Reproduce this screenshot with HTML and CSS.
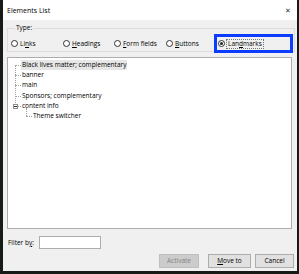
FILE: index.html
```html
<!DOCTYPE html>
<html lang="en">

<head>
  <meta charset="UTF-8">
  <meta name="viewport" content="width=device-width, initial-scale=1.0">
  <title>Elements List</title>
  <link rel="stylesheet" href="styles.css">
</head>

<body>
  <div class="dialog">
    <div class="titlebar">
      <span class="title">Elements List</span>
      <span class="close">&#x2715;</span>
    </div>

    <div class="content">
      <fieldset class="type-group">
        <legend>Type:</legend>
        <label class="radio radio-links"><span class="dot"></span><span>Li<u>n</u>ks</span></label>
        <label class="radio radio-headings"><span class="dot"></span><span><u>H</u>eadings</span></label>
        <label class="radio radio-forms"><span class="dot"></span><span><u>F</u>orm fields</span></label>
        <label class="radio radio-buttons"><span class="dot"></span><span><u>B</u>uttons</span></label>
        <label class="radio radio-landmarks checked"><span class="dot"></span><span class="focus">Lan<u>d</u>marks</span></label>
      </fieldset>

      <div class="tree">
        <div class="branch">
          <div class="node"><span class="item selected">Black lives matter; complementary</span></div>
          <div class="node"><span class="item">banner</span></div>
          <div class="node"><span class="item">main</span></div>
          <div class="node"><span class="item">Sponsors; complementary</span></div>
          <div class="node">
            <span class="toggle"></span><span class="item">content info</span>
          </div>
        </div>
        <div class="children">
          <div class="node"><span class="item">Theme switcher</span></div>
        </div>
      </div>

      <div class="filter">
        <label for="filter">Filter b<u>y</u>:</label>
        <input type="text" id="filter">
      </div>

      <div class="actions">
        <button class="btn-activate" disabled>Activate</button>
        <button class="btn-move"><u>M</u>ove to</button>
        <button class="btn-cancel">Cancel</button>
      </div>
    </div>
  </div>
</body>

</html>
```

FILE: styles.css
```css
body {
  margin: 0;
  padding: 0;
  background-color: #161b17;
  font-family: "Open Sans", "Noto Sans", sans-serif;
  font-size: 6.5px;
  color: #000;
}

.dialog {
  width: 294px;
  height: 271px;
  margin-left: 3px;
  background-color: #f0f0f0;
  display: flex;
  flex-direction: column;
}

.titlebar {
  height: 20px;
  flex-shrink: 0;
  background-color: #fff;
  display: flex;
  align-items: center;
  justify-content: space-between;
  padding: 0 6px 0 4px;
}

.title {
  font-size: 7px;
}

.close {
  font-size: 7px;
  color: #333;
}

.content {
  flex: 1;
  padding: 4px 2px 0 4px;
  display: flex;
  flex-direction: column;
}

u {
  text-decoration-thickness: 1px;
  text-underline-offset: 1px;
}

.type-group {
  margin: 0;
  padding: 2px 0 0 3px;
  border: 1px solid #dcdcdc;
  height: 24px;
  display: flex;
  align-items: center;
}

.type-group legend {
  padding: 0 1px;
  margin-left: 4px;
  line-height: 8px;
}

.radio {
  display: flex;
  align-items: center;
  gap: 2px;
  white-space: nowrap;
  flex-shrink: 0;
}

.radio-links {
  width: 52px;
}

.radio-headings {
  width: 51px;
}

.radio-forms {
  width: 52px;
}

.radio-buttons {
  width: 48px;
}

.dot {
  width: 7px;
  height: 7px;
  border: 1px solid #333;
  border-radius: 50%;
  background-color: #fff;
  box-sizing: border-box;
  display: flex;
  align-items: center;
  justify-content: center;
  flex-shrink: 0;
}

.checked .dot::after {
  content: "";
  width: 3px;
  height: 3px;
  border-radius: 50%;
  background-color: #222;
}

.radio-landmarks {
  width: 72px;
  height: 13px;
  border: 3px solid #0b3cff;
  padding-left: 1px;
}

.focus {
  outline: 1px dotted #777;
  padding: 0 1px;
  line-height: 8px;
}

.tree {
  margin-top: 5px;
  margin-right: 3px;
  height: 168px;
  flex-shrink: 0;
  background-color: #fff;
  border: 1px solid #adadad;
  padding: 2px 0 0 7px;
}

.node {
  position: relative;
  padding-left: 6px;
  height: 10.2px;
  line-height: 10px;
}

.node::before {
  content: "";
  position: absolute;
  left: 0;
  top: 5px;
  width: 6px;
  border-top: 1px dotted #a0a0a0;
}

.branch {
  position: relative;
}

.branch::before {
  content: "";
  position: absolute;
  left: 0;
  top: 5px;
  height: 38px;
  border-left: 1px dotted #a0a0a0;
}

.item {
  padding: 0 1px;
}

.selected {
  display: inline-block;
  background-color: #e6e6e6;
  line-height: 10px;
}

.toggle {
  position: absolute;
  left: -2px;
  top: 3px;
  width: 3px;
  height: 3px;
  border: 1px solid #8e8e8e;
  background-color: #fff;
  z-index: 1;
  display: flex;
  align-items: center;
  justify-content: center;
}

.toggle::after {
  content: "";
  width: 3px;
  border-top: 1px solid #333;
}

.children {
  position: relative;
  margin-left: 11px;
}

.children::before {
  content: "";
  position: absolute;
  left: 0;
  top: -3px;
  height: 8px;
  border-left: 1px dotted #a0a0a0;
}

.filter {
  margin-top: 7px;
  display: flex;
  align-items: center;
  gap: 5px;
  padding-left: 1px;
}

.filter label {
  width: 26px;
}

.filter input {
  width: 60px;
  height: 11px;
  border: 1px solid #adadad;
  padding: 0;
  margin: 0;
  background-color: #fff;
}

.actions {
  margin-top: 5px;
  display: flex;
  justify-content: flex-end;
  padding-right: 1px;
}

button {
  font-family: inherit;
  font-size: 6.5px;
  height: 14px;
  padding: 0;
  background-color: #e1e1e1;
  border: 1px solid #adadad;
  color: #000;
  line-height: 12px;
}

.btn-activate {
  width: 40px;
  margin-right: 9px;
  background-color: #cccccc;
  border-color: #bfbfbf;
  color: #838383;
}

.btn-move {
  width: 43px;
  margin-right: 4px;
}

.btn-cancel {
  width: 39px;
}
```
